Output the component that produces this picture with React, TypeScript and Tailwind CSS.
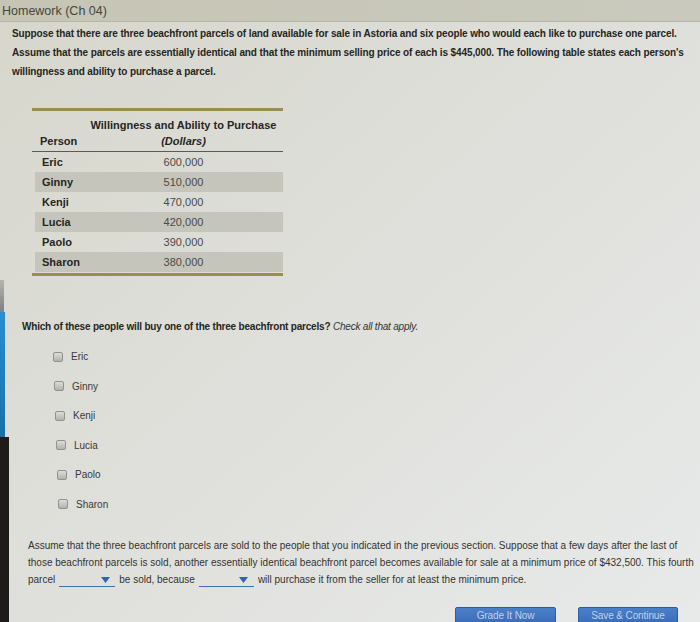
export default function App() {
  const rows: [string, string][] = [
    ["Eric", "600,000"],
    ["Ginny", "510,000"],
    ["Kenji", "470,000"],
    ["Lucia", "420,000"],
    ["Paolo", "390,000"],
    ["Sharon", "380,000"],
  ];
  const people = ["Eric", "Ginny", "Kenji", "Lucia", "Paolo", "Sharon"];
  return (
    <div className="relative w-[700px] h-[622px] overflow-hidden bg-gradient-to-br from-[#d6d6cc] via-[#dfe0db] to-[#e8eaea] font-['Liberation_Sans',Arial,sans-serif] text-[#262622]">
      <div className="h-[22px] bg-gradient-to-r from-[#c6c5b5] to-[#c9c9bd] border-b border-[#b6b5a6] pl-[2px] text-[12.5px] leading-[23px] text-[#45453c]">
        Homework (Ch 04)
      </div>
      <p className="pl-[12px] pt-[2px] text-[10px] tracking-[-0.12px] font-bold leading-[19px] whitespace-nowrap">
        Suppose that there are three beachfront parcels of land available for sale in Astoria and six people who would each like to purchase one parcel.
        <br />
        Assume that the parcels are essentially identical and that the minimum selling price of each is $445,000. The following table states each person's
        <br />
        willingness and ability to purchase a parcel.
      </p>

      <div className="ml-[32px] mt-[27px] w-[251px]">
        <div className="h-[3px] bg-[#9a8d54]" />
        <div className="grid grid-cols-[52px_1fr] pt-[6px] pb-[2px] border-b border-[#5b5b55] text-[11px] font-bold leading-[16px]">
          <div />
          <div className="text-center">Willingness and Ability to Purchase</div>
          <div className="pl-[8px]">Person</div>
          <div className="text-center italic">(Dollars)</div>
        </div>
        {rows.map(([n, v], i) => (
          <div
            key={n}
            className={`grid grid-cols-[52px_1fr] h-[20px] items-center text-[11px] ${i % 2 === 1 ? "bg-[#c5c5bc] ml-[3px]" : ""}`}
          >
            <div className={`font-bold ${i % 2 === 1 ? "pl-[7px]" : "pl-[10px]"}`}>{n}</div>
            <div className={`text-center text-[#4a4a46] ${i % 2 === 1 ? "pr-[3px]" : ""}`}>{v}</div>
          </div>
        ))}
        <div className="h-[3px] mt-[1px] bg-[#9a8d54]" />
      </div>

      <p className="pl-[22px] mt-[43px] text-[10px] tracking-[-0.2px] leading-[16px] font-bold whitespace-nowrap">
        Which of these people will buy one of the three beachfront parcels? <span className="italic font-normal text-[#333]">Check all that apply.</span>
      </p>

      <div className="mt-[7px] flex flex-col">
        {people.map((p, i) => (
          <div key={p} className="h-[29.5px] flex items-center" style={{ paddingLeft: 53 + i }}>
            <span className="w-[10px] h-[10px] rounded-[2px] border border-[#929290] bg-gradient-to-b from-[#dcdcda] to-[#b2b2af]" />
            <span className="ml-[8px] text-[10px] text-[#3a3a37]">{p}</span>
          </div>
        ))}
      </div>

      <p className="pl-[28px] mt-[18px] text-[10px] leading-[17px] text-[#333330] whitespace-nowrap">
        Assume that the three beachfront parcels are sold to the people that you indicated in the previous section. Suppose that a few days after the last of
        <br />
        those beachfront parcels is sold, another essentially identical beachfront parcel becomes available for sale at a minimum price of $432,500. This fourth
        <br />
        parcel
        <span className="inline-flex items-center justify-end w-[56px] h-[14px] mx-[4px] border-b border-[#3f6fb8] align-middle">
          <svg width="9" height="6" viewBox="0 0 9 6" className="mr-[5px]">
            <path d="M0 0 L9 0 L4.5 6 Z" fill="#2f63b5" />
          </svg>
        </span>
        be sold, because
        <span className="inline-flex items-center justify-end w-[55px] h-[14px] mx-[4px] border-b border-[#3f6fb8] align-middle">
          <svg width="9" height="6" viewBox="0 0 9 6" className="mr-[6px]">
            <path d="M0 0 L9 0 L4.5 6 Z" fill="#2f63b5" />
          </svg>
        </span>
        will purchase it from the seller for at least the minimum price.
      </p>

      <div className="mt-[19px] flex justify-end gap-[22px] pr-[22px]">
        <div className="w-[101px] h-[22px] rounded-[2px] border border-[#2e5a9e] bg-gradient-to-b from-[#4a80ca] to-[#3567b3] text-center text-[10px] tracking-[-0.1px] leading-[16px] text-[#c3d0e6]">
          Grade It Now
        </div>
        <div className="w-[100px] h-[22px] rounded-[2px] border border-[#2e5a9e] bg-gradient-to-b from-[#4a80ca] to-[#3567b3] text-center text-[10px] tracking-[-0.1px] leading-[16px] text-[#c3d0e6]">
          Save &amp; Continue
        </div>
      </div>

      <div className="absolute left-0 top-[280px] w-[4px] h-[32px] bg-gradient-to-b from-[#b5b5ae] to-[#7d8184]" />
      <div className="absolute left-0 top-[312px] w-[5px] h-[125px] bg-gradient-to-b from-[#2a8fd0] to-[#1b6fa8]" />
      <div className="absolute left-0 top-[437px] w-[9px] h-[185px] bg-[#1f1b1b]" />
    </div>
  );
}
